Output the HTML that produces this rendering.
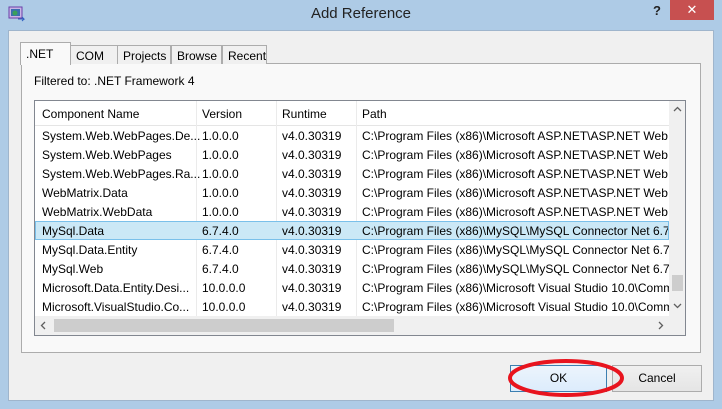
<!DOCTYPE html>
<html><head><style>
*{margin:0;padding:0;box-sizing:border-box}
body{width:722px;height:409px;background:#aecbe6;font-family:"Liberation Sans",sans-serif;font-size:12px;color:#000;position:relative;overflow:hidden}
.a{position:absolute}
.client{left:8px;top:30px;width:706px;height:371px;background:#f0f0f0;border:1px solid #9fb5cc}
.tab{position:absolute;top:45px;height:19px;border:1px solid #acacac;border-bottom:none;background:#f0f0f0;padding:3px 0 0 5px;font-size:12px}
.panel{left:21px;top:63px;width:680px;height:290px;border:1px solid #acacac;background:#f9f9f9}
.list{left:34px;top:100px;width:652px;height:236px;border:1px solid #828790;background:#fff;overflow:hidden}
.row{position:absolute;left:0;height:19px;width:634px;white-space:nowrap;overflow:hidden}
.row span{position:absolute;top:3px}
.c1{left:7px}.c2{left:167px}.c3{left:247px}.c4{left:327px}
.sep{position:absolute;top:0;width:1px;height:215px;background:#ebebeb}
.btn{position:absolute;height:27px;border:1px solid #acacac;background:linear-gradient(#f0f0f0,#e5e5e5);text-align:center;line-height:25px}
</style></head><body>
<svg class="a" style="left:8px;top:6px" width="18" height="16"><rect x="1" y="1" width="13" height="11" fill="#c9b4e6" stroke="#6a3fa8"/><rect x="3" y="3" width="9" height="7" fill="#3b6fb0"/><circle cx="7" cy="7" r="2.5" fill="#3aa05a"/><path d="M10 13h6l-2-2M16 13l-2 2" stroke="#3060c0" fill="none"/></svg>
<div class="a" style="left:0;width:722px;top:5px;text-align:center;font-size:15px;color:#222">Add Reference</div>
<div class="a" style="left:653px;top:3px;font-weight:bold;font-size:13px;color:#222">?</div>
<div class="a" style="left:670px;top:0;width:44px;height:20px;background:#c75050;color:#fff;text-align:center;font-size:13px;line-height:20px">✕</div>
<div class="a client"></div>
<div class="a panel"></div>
<div class="tab" style="left:20px;top:42px;width:51px;height:23px;background:#f9f9f9;border-color:#acacac;padding-top:4px;z-index:2">.NET</div>
<div class="tab" style="left:70px;width:48px;padding-left:5px">COM</div>
<div class="tab" style="left:117px;width:54px">Projects</div>
<div class="tab" style="left:171px;width:51px">Browse</div>
<div class="tab" style="left:222px;width:45px">Recent</div>
<div class="a" style="left:34px;top:74px">Filtered to: .NET Framework 4</div>
<div class="a list">
 <div class="row" style="top:0;height:25px;border-bottom:1px solid #e5e5e5;background:#fff"><span class="c1" style="top:6px">Component Name</span><span class="c2" style="top:6px">Version</span><span class="c3" style="top:6px">Runtime</span><span class="c4" style="top:6px">Path</span></div>
 <div class="sep" style="left:161px;height:25px;background:#e5e5e5"></div><div class="sep" style="left:241px;height:25px;background:#e5e5e5"></div><div class="sep" style="left:321px;height:25px;background:#e5e5e5"></div>
 <div class="sep" style="left:161px"></div><div class="sep" style="left:241px"></div><div class="sep" style="left:321px"></div>
 <div class="row" style="top:25px"><span class="c1">System.Web.WebPages.De...</span><span class="c2">1.0.0.0</span><span class="c3">v4.0.30319</span><span class="c4">C:\Program Files (x86)\Microsoft ASP.NET\ASP.NET Web Pages</span></div>
 <div class="row" style="top:44px"><span class="c1">System.Web.WebPages</span><span class="c2">1.0.0.0</span><span class="c3">v4.0.30319</span><span class="c4">C:\Program Files (x86)\Microsoft ASP.NET\ASP.NET Web Pages</span></div>
 <div class="row" style="top:63px"><span class="c1">System.Web.WebPages.Ra...</span><span class="c2">1.0.0.0</span><span class="c3">v4.0.30319</span><span class="c4">C:\Program Files (x86)\Microsoft ASP.NET\ASP.NET Web Pages</span></div>
 <div class="row" style="top:82px"><span class="c1">WebMatrix.Data</span><span class="c2">1.0.0.0</span><span class="c3">v4.0.30319</span><span class="c4">C:\Program Files (x86)\Microsoft ASP.NET\ASP.NET Web Pages</span></div>
 <div class="row" style="top:101px"><span class="c1">WebMatrix.WebData</span><span class="c2">1.0.0.0</span><span class="c3">v4.0.30319</span><span class="c4">C:\Program Files (x86)\Microsoft ASP.NET\ASP.NET Web Pages</span></div>
 <div class="row" style="top:120px;background:#cbe8f6;border:1px solid #7ac0ea"><span class="c1" style="left:6px;top:2px">MySql.Data</span><span class="c2" style="left:166px;top:2px">6.7.4.0</span><span class="c3" style="left:246px;top:2px">v4.0.30319</span><span class="c4" style="left:326px;top:2px">C:\Program Files (x86)\MySQL\MySQL Connector Net 6.7.4</span></div>
 <div class="row" style="top:139px"><span class="c1">MySql.Data.Entity</span><span class="c2">6.7.4.0</span><span class="c3">v4.0.30319</span><span class="c4">C:\Program Files (x86)\MySQL\MySQL Connector Net 6.7.4</span></div>
 <div class="row" style="top:158px"><span class="c1">MySql.Web</span><span class="c2">6.7.4.0</span><span class="c3">v4.0.30319</span><span class="c4">C:\Program Files (x86)\MySQL\MySQL Connector Net 6.7.4</span></div>
 <div class="row" style="top:177px"><span class="c1">Microsoft.Data.Entity.Desi...</span><span class="c2">10.0.0.0</span><span class="c3">v4.0.30319</span><span class="c4">C:\Program Files (x86)\Microsoft Visual Studio 10.0\Common7</span></div>
 <div class="row" style="top:196px"><span class="c1">Microsoft.VisualStudio.Co...</span><span class="c2">10.0.0.0</span><span class="c3">v4.0.30319</span><span class="c4">C:\Program Files (x86)\Microsoft Visual Studio 10.0\Common7</span></div>
 <div class="a" style="left:634px;top:0;width:17px;height:215px;background:#f0f0f0"></div>
 <svg class="a" style="left:634px;top:0" width="17" height="17"><path d="M5 10l3.5-3.5L12 10" stroke="#606060" stroke-width="1.3" fill="none"/></svg>
 <div class="a" style="left:637px;top:174px;width:11px;height:16px;background:#cdcdcd"></div>
 <svg class="a" style="left:634px;top:196px" width="17" height="17"><path d="M5 7l3.5 3.5L12 7" stroke="#606060" stroke-width="1.3" fill="none"/></svg>
 <div class="a" style="left:0;top:215px;width:651px;height:19px;background:#f0f0f0"></div>
 <div class="a" style="left:19px;top:218px;width:340px;height:13px;background:#cdcdcd"></div>
 <svg class="a" style="left:0;top:216px" width="17" height="17"><path d="M10 5l-3.5 3.5L10 12" stroke="#606060" stroke-width="1.3" fill="none"/></svg>
 <svg class="a" style="left:617px;top:216px" width="17" height="17"><path d="M7 5l3.5 3.5L7 12" stroke="#606060" stroke-width="1.3" fill="none"/></svg>
</div>
<div class="btn" style="left:510px;top:365px;width:97px;border-color:#3c7fb1;background:linear-gradient(#ecf4fc,#dcecfc)">OK</div>
<div class="btn" style="left:612px;top:365px;width:90px">Cancel</div>
<svg class="a" style="left:505px;top:357px" width="122" height="42"><ellipse cx="61" cy="21" rx="56" ry="17" fill="none" stroke="#e8141e" stroke-width="4"/></svg>
</body></html>
